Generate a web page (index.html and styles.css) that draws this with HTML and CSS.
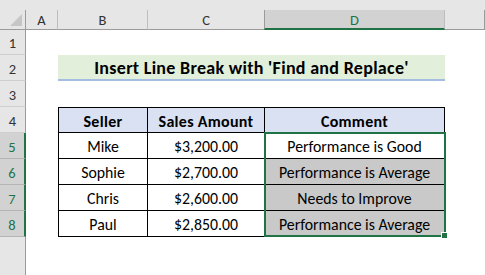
FILE: index.html
```html
<!DOCTYPE html>
<html>
<head>
<meta charset="utf-8">
<link rel="stylesheet" href="styles.css">
</head>
<body>
<div class="app">
  <div class="ribbon"></div>
  <div class="sheet">
    <div class="ch corner"><span class="tri"></span></div>
    <div class="ch">A</div>
    <div class="ch">B</div>
    <div class="ch">C</div>
    <div class="ch sel">D</div>
    <div class="ch fill"></div>

    <div class="rh">1</div>
    <div class="blank span5"></div>

    <div class="rh">2</div>
    <div class="blank"></div>
    <div class="title">Insert Line Break with 'Find and Replace'</div>
    <div class="blank"></div>

    <div class="rh">3</div>
    <div class="blank span5"></div>

    <div class="rh">4</div>
    <div class="blank"></div>
    <div class="c th first">Seller</div>
    <div class="c th">Sales Amount</div>
    <div class="c th">Comment</div>
    <div class="blank"></div>

    <div class="rh on">5</div>
    <div class="blank"></div>
    <div class="c first">Mike</div>
    <div class="c">$3,200.00</div>
    <div class="c colD r5">Performance is Good</div>
    <div class="blank"></div>

    <div class="rh on">6</div>
    <div class="blank"></div>
    <div class="c first">Sophie</div>
    <div class="c">$2,700.00</div>
    <div class="c colD r6 grey">Performance is Average</div>
    <div class="blank"></div>

    <div class="rh on">7</div>
    <div class="blank"></div>
    <div class="c first">Chris</div>
    <div class="c">$2,600.00</div>
    <div class="c colD r7 grey">Needs to Improve</div>
    <div class="blank"></div>

    <div class="rh on">8</div>
    <div class="blank"></div>
    <div class="c first">Paul</div>
    <div class="c">$2,850.00</div>
    <div class="c colD r8 grey">Performance is Average</div>
    <div class="blank"></div>

    <div class="rh empty"></div>
    <div class="blank span5"></div>

    <div class="selection"><span class="handle"></span></div>
  </div>
</div>
</body>
</html>
```
FILE: styles.css
```css
* { box-sizing: border-box; }
html, body { margin: 0; padding: 0; }
body {
  width: 485px;
  height: 275px;
  overflow: hidden;
  background: #ffffff;
  font-family: Carlito, Calibri, Lato, "Liberation Sans", sans-serif;
  color: #000;
}
.app {
  display: flex;
  flex-direction: column;
  height: 275px;
}
.ribbon {
  height: 10px;
  background: #e6e6e6;
  flex: none;
}
.sheet {
  flex: 1;
  display: grid;
  grid-template-columns: 26px 32px 90px 117px 180px 1fr;
  grid-template-rows: 20px 25px repeat(7, 26px) 1fr;
}
.ch {
  background: #e6e6e6;
  border-right: 1px solid #bdbdbd;
  border-bottom: 1px solid #9b9b9b;
  display: flex;
  align-items: center;
  justify-content: center;
  font-size: 14.5px;
  color: #333;
  padding-top: 1px;
}
.ch.corner { border-right-color: #9b9b9b; position: relative; }
.ch.sel {
  background: #d2d2d2;
  color: #217346;
  border-left: 1px solid #9b9b9b;
  margin-left: -1px;
  border-bottom: 2px solid #217346;
}
.ch.fill { border-right: 1px solid #9b9b9b; }
.tri {
  position: absolute;
  right: 3px;
  bottom: 3px;
  width: 12px;
  height: 12px;
  background: #c6c6c6;
  clip-path: polygon(100% 0, 100% 100%, 0 100%);
}
.rh {
  background: #e6e6e6;
  border-right: 1px solid #9b9b9b;
  border-bottom: 1px solid #cfcfcf;
  display: flex;
  align-items: center;
  justify-content: center;
  font-size: 14.5px;
  color: #333;
  padding-top: 2px;
}
.rh.on {
  background: #d2d2d2;
  color: #217346;
  border-right: 2px solid #217346;
  border-bottom-color: #b5b5b5;
}
.rh.empty { border-bottom: none; }
.blank { background: #fff; }
.span5 { grid-column: span 5; }
.title {
  grid-column: span 3;
  background: #e2efda;
  border-bottom: 2px solid #a6bde2;
  display: flex;
  align-items: center;
  justify-content: center;
  font-weight: bold;
  font-size: 18px;
  letter-spacing: 0.3px;
  padding-top: 1px;
}
.c {
  border-right: 1px solid #000;
  border-bottom: 1px solid #000;
  display: flex;
  align-items: center;
  justify-content: center;
  font-size: 15.8px;
  padding-top: 2px;
  white-space: nowrap;
}
.c.first { border-left: 1px solid #000; }
.c.th {
  background: #d9e1f2;
  border-top: 1px solid #000;
  font-weight: bold;
  font-size: 16px;
  letter-spacing: 0.3px;
}
.c.grey { background: #c9c9c9; }
.colD { grid-column: 5; }
.r5 { grid-row: 6; }
.r6 { grid-row: 7; }
.r7 { grid-row: 8; }
.r8 { grid-row: 9; }
.selection {
  grid-column: 5;
  grid-row: 6 / 10;
  margin: -1px -1px 0 -1px;
  border: 2px solid #217346;
  position: relative;
  z-index: 2;
}
.handle {
  position: absolute;
  right: -4px;
  bottom: -4px;
  width: 7px;
  height: 7px;
  background: #217346;
  border: 1px solid #fff;
}
```
